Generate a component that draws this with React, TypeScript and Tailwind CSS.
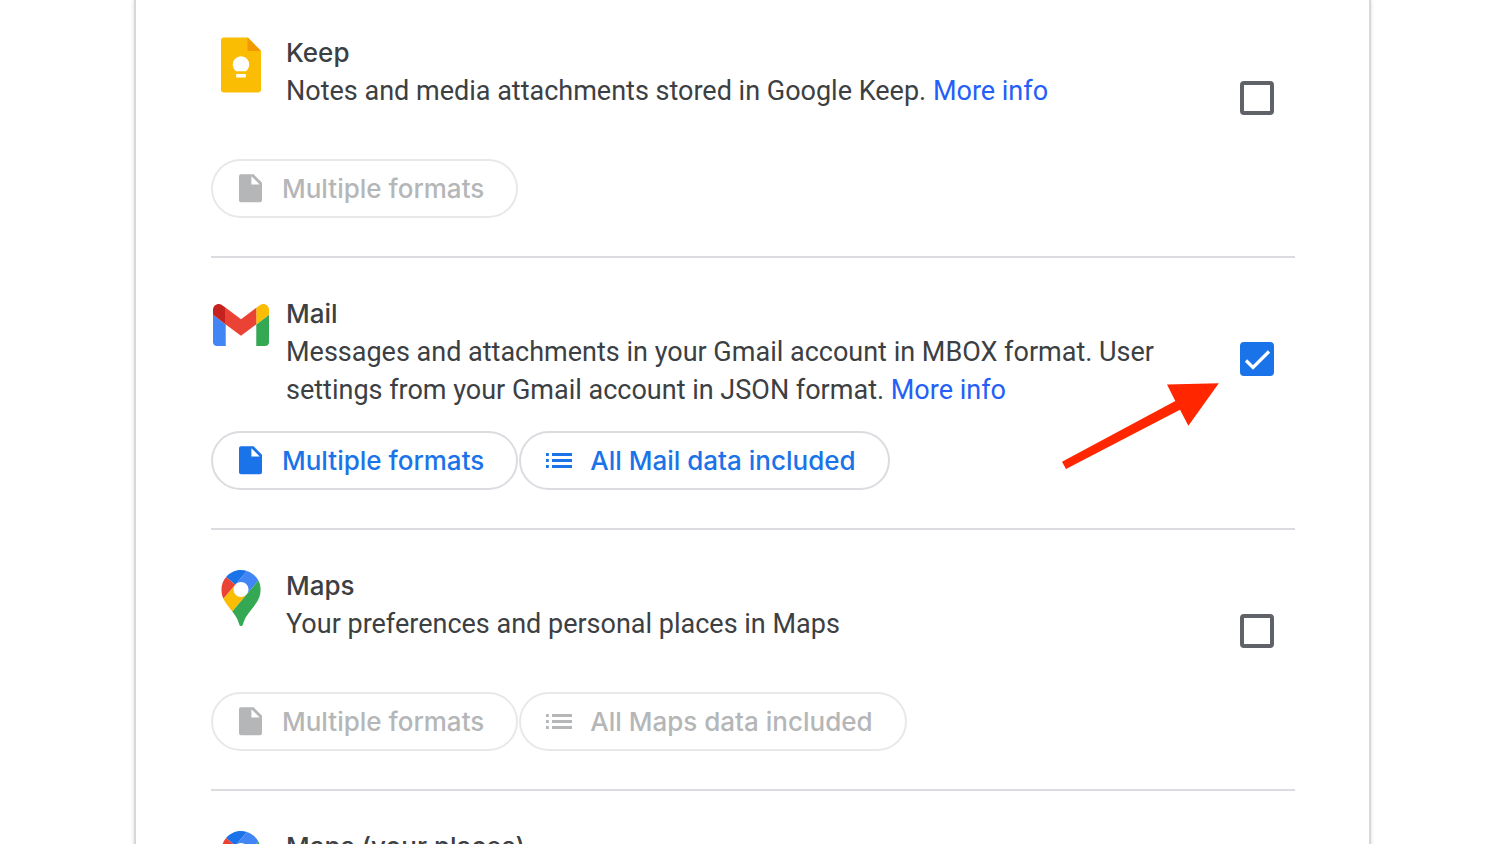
import type { ReactNode } from "react"

type ChipType = {
  icon: "file" | "list",
  label: string
}

type ProductType = {
  id: string,
  name: string,
  logo: ReactNode,
  description?: string,
  moreInfo?: boolean,
  selected?: boolean,
  chips: ChipType[]
}

const KeepLogo = () => (
  <svg viewBox="0 0 56 56" className="size-14" aria-hidden="true">
    <path fill="#fbbc04" d="M11 .5h24L48 14v38.5a3 3 0 0 1-3 3H11a3 3 0 0 1-3-3v-49a3 3 0 0 1 3-3z" />
    <path fill="#f29900" d="M34.5.5 48 14H34.5z" />
    <path fill="#fff" d="M23.1 34.2a8.3 8.3 0 1 1 9.8 0zM23.2 36.9h9.6v3.5h-9.6z" />
  </svg>
)

const GmailLogo = () => (
  <svg viewBox="52 32.5 88 88" className="size-14" aria-hidden="true">
    <path fill="#4285f4" d="M58 108h14V74L52 59v43c0 3.32 2.69 6 6 6" />
    <path fill="#34a853" d="M120 108h14c3.32 0 6-2.69 6-6V59l-20 15" />
    <path fill="#fbbc04" d="M120 48v26l20-15v-8c0-7.42-8.47-11.65-14.4-7.2" />
    <path fill="#ea4335" d="M72 74V48l24 18 24-18v26L96 92" />
    <path fill="#c5221f" d="M52 51v8l20 15V48l-5.6-4.2c-5.94-4.45-14.4-.22-14.4 7.2" />
  </svg>
)

const MapsLogo = () => (
  <svg viewBox="-20 0 132.3 132.3" className="size-14" aria-hidden="true">
    <path fill="#1a73e8" d="M60.2 2.2C55.8.8 51 0 46.1 0 32 0 19.3 6.4 10.8 16.5l21.8 18.3L60.2 2.2z" />
    <path fill="#ea4335" d="M10.8 16.5C4.1 24.5 0 34.9 0 46.1c0 8.7 1.7 15.7 4.6 22l28-33.3-21.8-18.3z" />
    <path fill="#4285f4" d="M46.2 28.5c9.8 0 17.7 7.9 17.7 17.7 0 4.3-1.6 8.3-4.2 11.4 0 0 13.9-16.6 27.5-32.7-5.6-10.8-15.3-19-27-22.7L32.6 34.8c3.3-3.8 8.1-6.3 13.6-6.3" />
    <path fill="#fbbc04" d="M46.2 63.8c-9.8 0-17.7-7.9-17.7-17.7 0-4.3 1.5-8.3 4.1-11.3l-28 33.3c4.8 10.6 12.8 19.2 21 29.9l34.1-40.5c-3.3 3.9-8.1 6.3-13.5 6.3" />
    <path fill="#34a853" d="M59.1 109.2c15.4-24.1 33.3-35 33.3-63 0-7.7-1.9-14.9-5.2-21.3L25.6 98c2.6 3.4 5.3 7.3 7.9 11.3 9.4 14.5 6.8 23.1 12.8 23.1s3.4-8.7 12.8-23.2" />
  </svg>
)

const FileIcon = () => (
  <svg viewBox="0 0 23 29" className="h-[29px] w-[23px]" fill="currentColor" aria-hidden="true">
    <path fillRule="evenodd" d="M2 .3h12.6L23 8.7v17.6a2 2 0 0 1-2 2H2a2 2 0 0 1-2-2v-24a2 2 0 0 1 2-2zM12.4 2.2v8.2h8.3z" />
  </svg>
)

const ListIcon = () => (
  <svg viewBox="0 0 26 17" className="h-[17px] w-[26px]" fill="currentColor" aria-hidden="true">
    <path d="M0 1h2.8v3H0zM6 1h20v3H6zM0 7h2.8v3H0zM6 7h20v3H6zM0 13h2.8v3H0zM6 13h20v3H6z" />
  </svg>
)

const Arrow = () => (
  <svg viewBox="0 0 160 90" className="pointer-events-none absolute top-[122px] right-[75px] h-[90px] w-40" aria-hidden="true">
    <path fill="#ff2600" d="M2 81.7 115.3 21 107 4.6 158.8 3.2 128.4 45.8 120 29.7 6 89z" />
  </svg>
)

const Chip = ({ icon, label, disabled }: ChipType & { disabled: boolean }) => {
  return (
    <button
      type="button"
      disabled={disabled}
      className="flex h-[59px] items-center gap-[18px] rounded-full border-2 border-[#dadce0] pr-8 pl-6 font-[Inter,sans-serif] text-[26px] font-medium text-[#1a73e8] disabled:border-[#e8e8e8] disabled:text-[#b5b6b8]"
    >
      <span className="flex w-[27px] justify-center">
        {icon === "file" ? <FileIcon /> : <ListIcon />}
      </span>
      {label}
    </button>
  )
}

const Product = ({ id, name, logo, description, moreInfo, selected = false, chips }: ProductType) => {
  return (
    <section className="relative border-t-2 border-[#dadce0] pt-[37px] pb-[38px] first:border-t-0 first:pt-[34px]">
      <div className="flex min-h-[103px] items-start">
        <div className="mt-[3px] mr-[17px] ml-0.5 shrink-0">{logo}</div>
        <div className="min-w-0 flex-1 pr-10">
          <h2 className="font-[Inter,sans-serif] text-[26px] leading-[38px] font-medium">
            <label htmlFor={id}>{name}</label>
          </h2>
          {description && (
            <p className="text-[27px] leading-[38px]">
              {description}
              {moreInfo && <> <a href="#" className="text-[#2460f7]">More info</a></>}
            </p>
          )}
        </div>
        <div className="mt-[47px] mr-[21px] grid shrink-0">
          <input
            id={id}
            type="checkbox"
            defaultChecked={selected}
            className="peer col-start-1 row-start-1 size-[34px] appearance-none rounded-sm border-4 border-[#5f6368] checked:border-[#1a73e8] checked:bg-[#1a73e8]"
          />
          <svg viewBox="0 0 34 34" className="pointer-events-none invisible col-start-1 row-start-1 size-[34px] peer-checked:visible" aria-hidden="true">
            <path d="m6 18.5 7 7L29 9.5" fill="none" stroke="#fff" strokeWidth="3.2" />
          </svg>
        </div>
      </div>
      <div className="mt-[22px] flex gap-px">
        {chips.map((chip) => (
          <Chip key={chip.label} {...chip} disabled={!selected} />
        ))}
      </div>
      {selected && <Arrow />}
    </section>
  )
}

const products: ProductType[] = [
  {
    id: "keep",
    name: "Keep",
    logo: <KeepLogo />,
    description: "Notes and media attachments stored in Google Keep.",
    moreInfo: true,
    chips: [{ icon: "file", label: "Multiple formats" }],
  },
  {
    id: "mail",
    name: "Mail",
    logo: <GmailLogo />,
    description: "Messages and attachments in your Gmail account in MBOX format. User settings from your Gmail account in JSON format.",
    moreInfo: true,
    selected: true,
    chips: [
      { icon: "file", label: "Multiple formats" },
      { icon: "list", label: "All Mail data included" },
    ],
  },
  {
    id: "maps",
    name: "Maps",
    logo: <MapsLogo />,
    description: "Your preferences and personal places in Maps",
    chips: [
      { icon: "file", label: "Multiple formats" },
      { icon: "list", label: "All Maps data included" },
    ],
  },
  {
    id: "maps-places",
    name: "Maps (your places)",
    logo: <MapsLogo />,
    chips: [],
  },
]

export default function App() {
  return (
    <div className="h-screen overflow-hidden bg-white font-[Roboto,sans-serif] text-[#3c4043]">
      <main className="mr-[129px] ml-[134px] border-x-2 border-[#d8d8d8] pr-[74px] pl-[75px] shadow-[0_0_4px_rgba(0,0,0,0.15)]">
        {products.map((product) => (
          <Product key={product.id} {...product} />
        ))}
      </main>
    </div>
  )
}
